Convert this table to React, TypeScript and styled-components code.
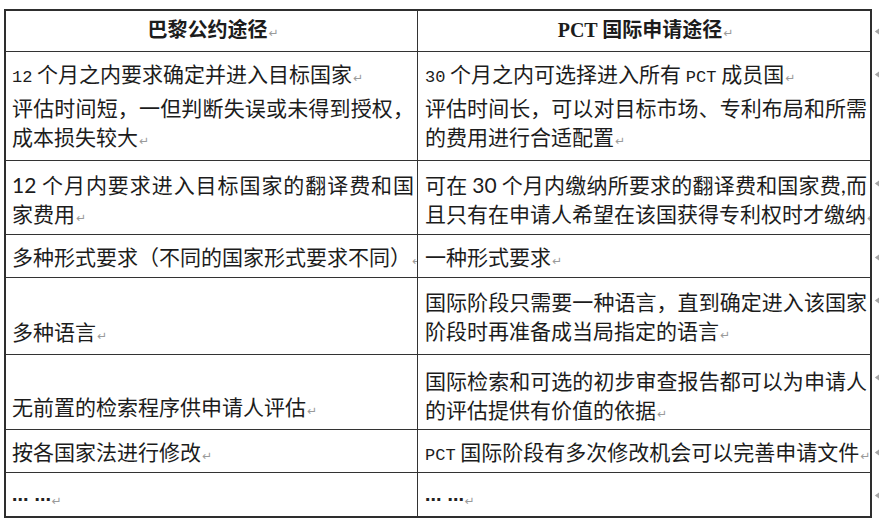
import React from "react";
import styled, { createGlobalStyle } from "styled-components";

type Line = { text: React.ReactNode; justify?: boolean; end?: boolean };
type CellData = { lines: Line[]; align?: "top" | "bottom" | "center" };
type RowData = { height: number; pad?: number; left: CellData; right: CellData; header?: boolean; last?: boolean };

const GlobalStyle = createGlobalStyle`
    html, body {
        margin: 0;
        padding: 0;
        background: #ffffff;
    }
    body {
        font-family: "Noto Sans CJK SC", "Liberation Sans", sans-serif;
        color: #1c1c1c;
    }
`;

const Mono = styled.span`
    font-family: "Liberation Mono", "DejaVu Sans Mono", monospace;
    font-size: 17px;
`;

const Latin = styled.span`
    font-family: Lato, "Liberation Sans", sans-serif;
`;

const SerifBold = styled.span`
    font-family: "Liberation Serif", serif;
    font-weight: 700;
`;

const Dots = styled.span`
    font-family: "DejaVu Sans", sans-serif;
    font-weight: 700;
    font-size: 16px;
    word-spacing: 1px;
    color: #222;
`;

const rows: RowData[] = [
    {
        height: 43,
        header: true,
        left: { lines: [{ text: "巴黎公约途径", end: true }], align: "center" },
        right: {
            lines: [{ text: <><SerifBold>PCT</SerifBold> 国际申请途径</>, end: true }],
            align: "center",
        },
    },
    {
        height: 109,
        pad: 7,
        left: {
            lines: [
                { text: <><Mono>12</Mono> 个月之内要求确定并进入目标国家</>, end: true },
                { text: "评估时间短，一但判断失误或未得到授权，", justify: true },
                { text: "成本损失较大", end: true },
            ],
        },
        right: {
            lines: [
                { text: <><Mono>30</Mono> 个月之内可选择进入所有 <Mono>PCT</Mono> 成员国</>, end: true },
                { text: "评估时间长，可以对目标市场、专利布局和所需", justify: true },
                { text: "的费用进行合适配置", end: true },
            ],
        },
    },
    {
        height: 74,
        pad: 9,
        left: {
            lines: [
                { text: <><Latin>12</Latin> 个月内要求进入目标国家的翻译费和国</>, justify: true },
                { text: "家费用", end: true },
            ],
        },
        right: {
            lines: [
                { text: <>可在 <Latin>30</Latin> 个月内缴纳所要求的翻译费和国家费<Latin>,</Latin>而</>, justify: true },
                { text: "且只有在申请人希望在该国获得专利权时才缴纳", end: true },
            ],
        },
    },
    {
        height: 43,
        pad: 7,
        left: { lines: [{ text: "多种形式要求（不同的国家形式要求不同）", end: true }] },
        right: { lines: [{ text: "一种形式要求", end: true }] },
    },
    {
        height: 77,
        pad: 9,
        left: { lines: [{ text: "多种语言", end: true }], align: "bottom" },
        right: {
            lines: [
                { text: "国际阶段只需要一种语言，直到确定进入该国家", justify: true },
                { text: "阶段时再准备成当局指定的语言", end: true },
            ],
        },
    },
    {
        height: 75,
        pad: 11,
        left: { lines: [{ text: "无前置的检索程序供申请人评估", end: true }], align: "bottom" },
        right: {
            lines: [
                { text: "国际检索和可选的初步审查报告都可以为申请人", justify: true },
                { text: "的评估提供有价值的依据", end: true },
            ],
        },
    },
    {
        height: 43,
        pad: 7,
        left: { lines: [{ text: "按各国家法进行修改", end: true }] },
        right: { lines: [{ text: <><Mono>PCT</Mono> 国际阶段有多次修改机会可以完善申请文件</>, end: true }] },
    },
    {
        height: 45,
        pad: 9,
        last: true,
        left: { lines: [{ text: <Dots>⋯ ⋯</Dots>, end: true }] },
        right: { lines: [{ text: <Dots>⋯ ⋯</Dots>, end: true }] },
    },
];

const Page = styled.div`
    width: 884px;
    height: 532px;
    padding: 9px 0 0 4px;
    box-sizing: border-box;
    overflow: hidden;
`;

const Table = styled.div`
    display: flex;
    flex-direction: column;
`;

const Row = styled.div<{ $h: number }>`
    display: grid;
    grid-template-columns: 414px 454px 12px;
    height: ${props => props.$h}px;
`;

const Cell = styled.div<{
    $side: "left" | "right";
    $header?: boolean;
    $last?: boolean;
    $pad: number;
    $align?: "top" | "bottom" | "center";
}>`
    box-sizing: border-box;
    display: flex;
    flex-direction: column;
    justify-content: ${props =>
        props.$align === "bottom" ? "flex-end" : props.$align === "center" ? "center" : "flex-start"};
    padding: ${props =>
        props.$align === "center"
            ? "0 3px 0 6px"
            : props.$align === "bottom"
            ? "0 3px 3px 6px"
            : `${props.$pad}px 3px 0 ${props.$side === "left" ? 6 : 7}px`};
    overflow: hidden;
    font-size: ${props => (props.$header ? 20 : 21)}px;
    line-height: 29px;
    font-weight: ${props => (props.$header ? 700 : 400)};
    text-align: ${props => (props.$header ? "center" : "left")};
    border-top: ${props => (props.$header ? "2px solid #2e2e2e" : "none")};
    border-bottom: ${props => (props.$last ? "2px solid #2e2e2e" : "1px solid #333333")};
    border-left: ${props => (props.$side === "left" ? "2px solid #2e2e2e" : "none")};
    border-right: ${props => (props.$side === "right" ? "2px solid #2e2e2e" : "1px solid #333333")};
`;

const TextLine = styled.div<{ $justify?: boolean }>`
    text-align: ${props => (props.$justify ? "justify" : "inherit")};
    text-align-last: ${props => (props.$justify ? "justify" : "auto")};
    white-space: nowrap;
`;

const Pilcrow = styled.span`
    font-family: "DejaVu Sans", sans-serif;
    font-size: 12px;
    font-weight: 400;
    color: #9a9a9a;
    margin-left: 1px;
`;

const RowEnd = styled.div`
    display: flex;
    align-items: flex-start;
    padding: 19px 0 0 2px;
`;

const EndMark = () => (
    <svg width="6" height="7" viewBox="0 0 6 7">
        <path d="M5 0.5 L0.8 3.5 L5 6.5 Z" fill="#a6a6a6" />
    </svg>
);

const CellBody: React.FC<{
    data: CellData;
    side: "left" | "right";
    pad: number;
    header?: boolean;
    last?: boolean;
}> = ({ data, side, pad, header, last }) => (
    <Cell $side={side} $header={header} $last={last} $pad={pad} $align={data.align}>
        {data.lines.map((line, i) => (
            <TextLine key={i} $justify={line.justify}>
                {line.text}
                {line.end && <Pilcrow>↵</Pilcrow>}
            </TextLine>
        ))}
    </Cell>
);

export default function App() {
    return (
        <>
            <GlobalStyle />
            <Page lang="zh-CN">
                <Table>
                    {rows.map((row, i) => (
                        <Row key={i} $h={row.height}>
                            <CellBody data={row.left} side="left" pad={row.pad ?? 8} header={row.header} last={row.last} />
                            <CellBody data={row.right} side="right" pad={row.pad ?? 8} header={row.header} last={row.last} />
                            <RowEnd>
                                <EndMark />
                            </RowEnd>
                        </Row>
                    ))}
                </Table>
            </Page>
        </>
    );
}
